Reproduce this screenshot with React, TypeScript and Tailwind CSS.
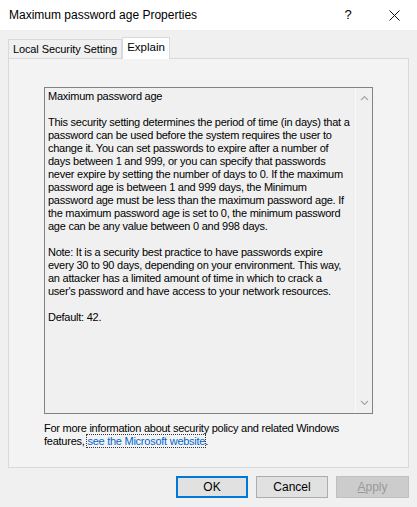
import React from "react";

const body = [
  "Maximum password age",
  "",
  "This security setting determines the period of time (in days) that a",
  "password can be used before the system requires the user to",
  "change it. You can set passwords to expire after a number of",
  "days between 1 and 999, or you can specify that passwords",
  "never expire by setting the number of days to 0. If the maximum",
  "password age is between 1 and 999 days, the Minimum",
  "password age must be less than the maximum password age. If",
  "the maximum password age is set to 0, the minimum password",
  "age can be any value between 0 and 998 days.",
  "",
  "Note: It is a security best practice to have passwords expire",
  "every 30 to 90 days, depending on your environment. This way,",
  "an attacker has a limited amount of time in which to crack a",
  "user's password and have access to your network resources.",
  "",
  "Default: 42.",
];

const font = { fontFamily: '"Liberation Sans", Arial, sans-serif' };

function Chevron({ up }: { up?: boolean }) {
  return (
    <svg width="9" height="6" viewBox="0 0 9 6" className="text-[#a6a6a6]">
      <path
        d={up ? "M1 5 L4.5 1.5 L8 5" : "M1 1 L4.5 4.5 L8 1"}
        fill="none"
        stroke="currentColor"
        strokeWidth="1.2"
      />
    </svg>
  );
}

export default function App() {
  return (
    <div
      className="w-[417px] h-[507px] bg-[#f0f0f0] flex flex-col text-black overflow-hidden"
      style={font}
    >
      {/* title bar */}
      <div className="h-[30px] bg-white flex items-center pl-[9px] shrink-0">
        <span className="text-[12px] flex-1">Maximum password age Properties</span>
        <span className="text-[13px] w-[46px] text-center">?</span>
        <span className="w-[46px] flex justify-center">
          <svg width="11" height="11" viewBox="0 0 11 11">
            <path d="M0.5 0.5 L10.5 10.5 M10.5 0.5 L0.5 10.5" stroke="#111" strokeWidth="1" />
          </svg>
        </span>
      </div>

      {/* tabs */}
      <div className="flex items-end h-[28px] px-[8px] shrink-0">
        <div className="h-[19px] w-[114px] border border-b-0 border-[#d9d9d9] bg-[#f0f0f0] text-[11px] tracking-[-0.1px] flex items-center justify-center">
          Local Security Setting
        </div>
        <div className="h-[22px] w-[48px] border border-b-0 border-[#d9d9d9] bg-white text-[11.5px] flex items-center justify-center -mb-px relative z-10 pb-[2px]">
          Explain
        </div>
      </div>

      {/* tab page */}
      <div className="mx-[8px] h-[410px] border border-[#d9d9d9] bg-[#f3f3f3] pt-[28px] pl-[35px] shrink-0">
        <div className="w-[329px] h-[327px] border border-[#828282] bg-[#f0f0f0] flex">
          <div className="flex-1 pl-[3px] pt-[2px] text-[11px] leading-[13px] tracking-[-0.25px] whitespace-pre">
            {body.map((l, i) => (
              <div key={i} className="h-[13px]">
                {l}
              </div>
            ))}
          </div>
          <div className="w-[17px] border-l border-[#f8f8f8] bg-[#f0f0f0] flex flex-col justify-between items-center py-[7px]">
            <Chevron up />
            <Chevron />
          </div>
        </div>
        <div className="mt-[8px] text-[11px] leading-[13px] tracking-[-0.25px]">
          <div>For more information about security policy and related Windows</div>
          <div>
            features,{" "}
            <span className="text-[#0066cc] outline-1 outline-dotted outline-[#333]">
              see the Microsoft website
            </span>
            .
          </div>
        </div>
      </div>

      {/* buttons */}
      <div className="flex justify-end gap-[8px] pr-[8px] mt-[8px]">
        <button className="w-[72px] h-[22px] border-2 border-[#0078d7] bg-[#e1e1e1] text-[12px]">
          OK
        </button>
        <button className="w-[72px] h-[22px] border border-[#adadad] bg-[#e1e1e1] text-[12px]">
          Cancel
        </button>
        <button className="w-[73px] h-[22px] border border-[#bfbfbf] bg-[#cccccc] text-[12px] text-[#9a9a9a]">
          <span className="underline">A</span>pply
        </button>
      </div>
    </div>
  );
}
